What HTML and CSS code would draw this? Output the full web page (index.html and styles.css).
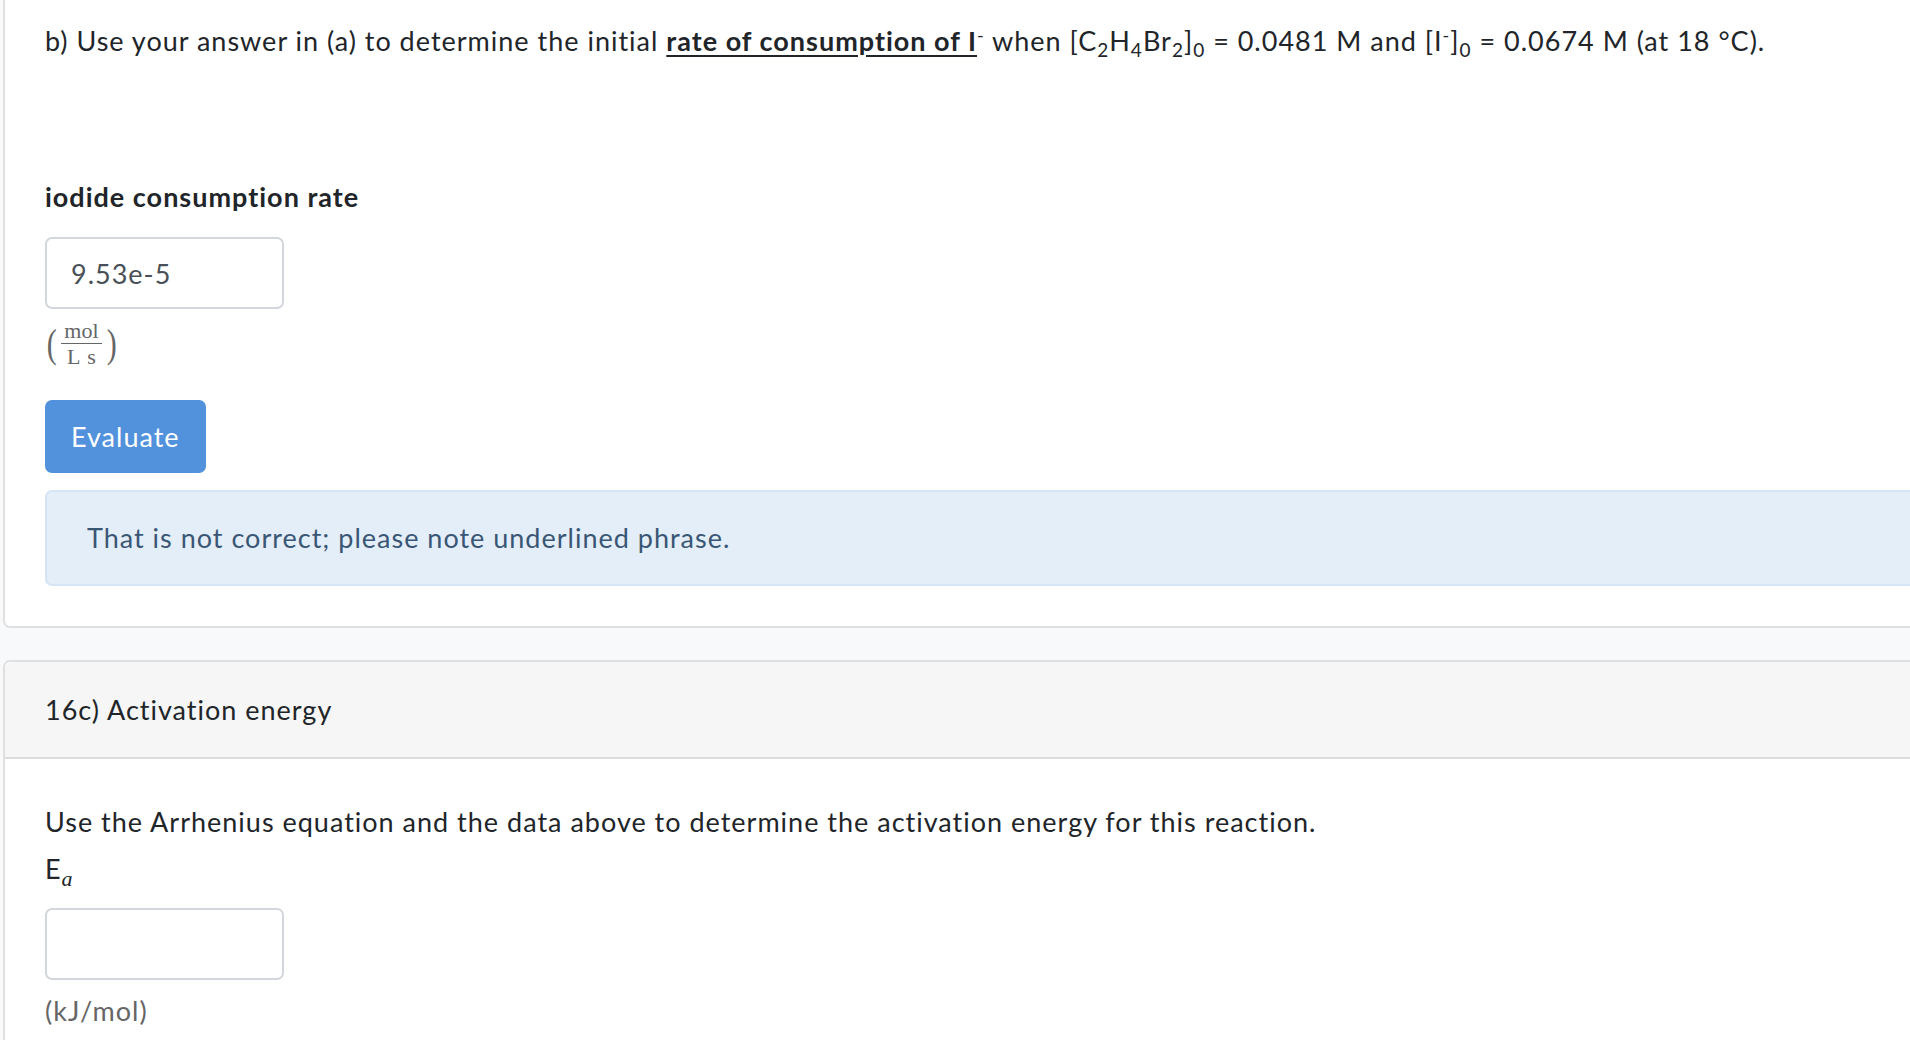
FILE: index.html
```html
<!DOCTYPE html>
<html lang="en">
<head>
  <meta charset="UTF-8">
  <title>Question 16</title>
  <link rel="stylesheet" href="styles.css">
</head>
<body>

  <div class="page">
    <div class="card card-cut">
      <div class="card-body">
        <p class="question">b) Use your answer in (a) to determine the initial <b class="marked">rate of consumption of I</b><sup class="charge">-</sup> when [C<sub>2</sub>H<sub>4</sub>Br<sub>2</sub>]<sub>0</sub> = 0.0481 M and [I<sup class="charge">-</sup>]<sub>0</sub> = 0.0674 M (at 18 &deg;C).</p>

        <label class="field-label" for="rate">iodide consumption rate</label>
        <input class="answer" type="text" id="rate" value="9.53e-5">
        <div class="unit">
          <span class="paren">(</span>
          <span class="frac">
            <span class="num">mol</span>
            <span class="den">L s</span>
          </span>
          <span class="paren">)</span>
        </div>

        <button class="btn-evaluate">Evaluate</button>

        <div class="alert">That is not correct; please note underlined phrase.</div>
      </div>
    </div>

    <div class="card">
      <div class="card-header">16c) Activation energy</div>
      <div class="card-body">
        <p class="question">Use the Arrhenius equation and the data above to determine the activation energy for this reaction.</p>
        <label class="field-label plain" for="ea">E<sub class="math">a</sub></label>
        <input class="answer" type="text" id="ea">
        <div class="unit unit-text">(kJ/mol)</div>
      </div>
    </div>
  </div>

</body>
</html>
```

FILE: styles.css
```css
body {
  margin: 0;
  background-color: #f8f9fa;
  font-family: Lato, sans-serif;
  font-size: 27px;
  line-height: 40px;
  letter-spacing: 1px;
  color: #212529;
  overflow: hidden;
}
.page {
  padding-left: 3px;
}
.card {
  width: 2100px;
  background-color: #fff;
  border: 2px solid #e0e0e0;
  border-radius: 7px;
  margin-top: 32px;
}
.card-cut {
  margin-top: 0;
  border-top: none;
  border-radius: 0 0 7px 7px;
}
.card-body {
  padding: 0 40px 38px 40px;
}
.card-cut .card-body {
  padding-top: 21px;
  padding-bottom: 40px;
}
.card-header {
  background-color: #f6f6f6;
  border-bottom: 2px solid #dcdcdc;
  padding: 28px 40px 27px 40px;
  border-radius: 7px 7px 0 0;
}
.question {
  margin: 0;
}
.card-header + .card-body .question {
  margin-top: 43px;
}
.question sub {
  font-size: 19px;
  line-height: 0;
  vertical-align: -6px;
}
.charge {
  font-size: 18px;
  line-height: 0;
  vertical-align: 9px;
}
.marked {
  font-weight: 700;
  text-decoration: underline;
  text-underline-offset: 4px;
}
.field-label {
  display: block;
  margin-top: 116px;
  margin-bottom: 20px;
  font-weight: 700;
}
.field-label.plain {
  font-weight: 400;
  margin-top: 7px;
  margin-bottom: 19px;
}
.field-label .math {
  font-family: "Liberation Serif", serif;
  font-style: italic;
  font-size: 22px;
  line-height: 0;
  vertical-align: -7px;
}
.answer {
  display: block;
  box-sizing: border-box;
  width: 239px;
  height: 72px;
  padding: 0 24px;
  border: 2px solid #d3d7dd;
  border-radius: 7px;
  font-family: inherit;
  font-size: 27px;
  letter-spacing: 1px;
  color: #495057;
  background-color: #fff;
}
.unit {
  display: flex;
  align-items: center;
  margin-top: 11px;
  height: 48px;
  color: #666;
  font-family: "Liberation Serif", serif;
  letter-spacing: 0;
}
.paren {
  font-size: 40px;
  line-height: 40px;
  transform: scaleX(0.75);
}
.frac {
  display: flex;
  flex-direction: column;
  align-items: center;
  margin: 0 3px;
  font-size: 22px;
  line-height: 20px;
}
.num {
  padding: 0 3px 2px 3px;
  border-bottom: 1.5px solid #666;
}
.den {
  padding-top: 3px;
  word-spacing: 2px;
}
.unit-text {
  font-family: Lato, sans-serif;
  font-size: 27px;
  letter-spacing: 1px;
  height: 40px;
}
.btn-evaluate {
  display: block;
  margin-top: 32px;
  height: 73px;
  padding: 0 26px;
  border: none;
  border-radius: 7px;
  background-color: #5291dc;
  color: #fff;
  font-family: inherit;
  font-size: 27px;
  letter-spacing: 1px;
}
.alert {
  margin-top: 17px;
  padding: 26px 40px;
  background-color: #e3eef9;
  border: 2px solid #d5e5f6;
  border-radius: 7px;
  color: #3a5675;
}
```
